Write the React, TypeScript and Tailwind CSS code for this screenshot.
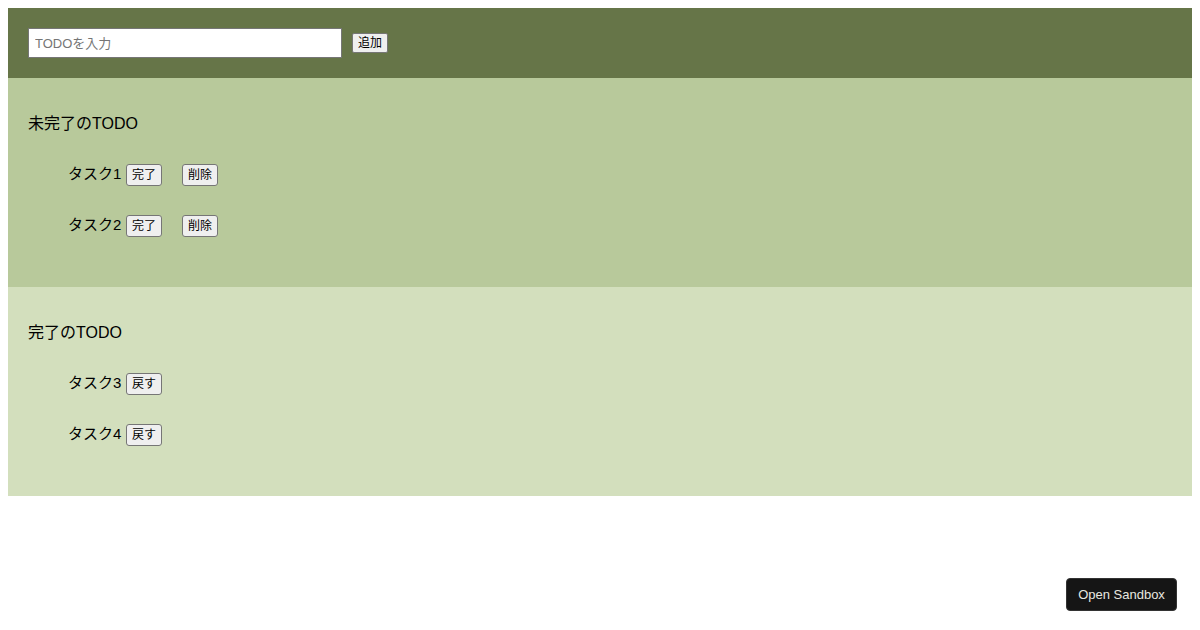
const font = {
  fontFamily: '"Liberation Sans", Arial, "Noto Sans CJK JP", sans-serif',
};

function SmallButton({ label }: { label: string }) {
  return (
    <button className="w-9 h-[22px] rounded-[3px] border border-[#767676] bg-[#efefef] text-[12px] leading-none text-black">
      {label}
    </button>
  );
}

function TodoRow({ text, buttons }: { text: string; buttons: string[] }) {
  return (
    <li className="flex items-center h-[51px]">
      <span className="w-[58px] text-[15px] whitespace-nowrap">{text}</span>
      <div className="flex gap-5">
        {buttons.map((b) => (
          <SmallButton key={b} label={b} />
        ))}
      </div>
    </li>
  );
}

export default function App() {
  const incomplete = ["タスク1", "タスク2"];
  const complete = ["タスク3", "タスク4"];

  return (
    <div className="relative w-[1200px] h-[630px] bg-white text-black" style={font}>
      <div className="p-2">
        <div className="flex items-center h-[70px] px-5 bg-[#667548]">
          <input
            className="w-[314px] h-[30px] border border-[#767676] bg-white px-[6px] text-[13px] placeholder:text-[#757575] outline-none"
            placeholder="TODOを入力"
          />
          <button className="ml-[10px] w-9 h-5 rounded-[2px] border border-[#767676] bg-[#efefef] text-[12px] leading-none">
            追加
          </button>
        </div>

        <div className="bg-[#b8c99b] px-5 pt-[21px] pb-5">
          <p className="my-4 text-[16px] leading-[18px]">未完了のTODO</p>
          <ul className="my-4 pl-10">
            {incomplete.map((t) => (
              <TodoRow key={t} text={t} buttons={["完了", "削除"]} />
            ))}
          </ul>
        </div>

        <div className="bg-[#d3dfbd] px-5 pt-[21px] pb-5">
          <p className="my-4 text-[16px] leading-[18px]">完了のTODO</p>
          <ul className="my-4 pl-10">
            {complete.map((t) => (
              <TodoRow key={t} text={t} buttons={["戻す"]} />
            ))}
          </ul>
        </div>
      </div>

      <button className="absolute right-[23px] bottom-[19px] w-[111px] h-[33px] rounded-[4px] border border-[#333] bg-[#151515] text-[13px] text-[#e8e8e0]">
        Open Sandbox
      </button>
    </div>
  );
}
